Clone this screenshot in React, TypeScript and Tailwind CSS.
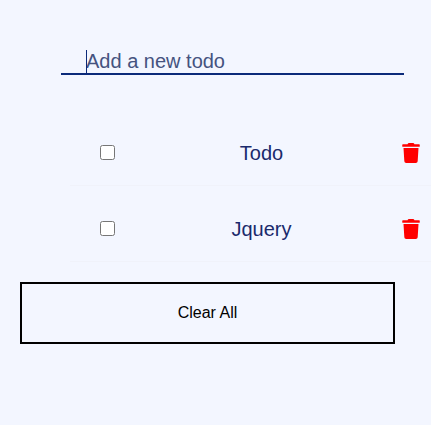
import { FaTrash } from "react-icons/fa";

function Row({ label }: { label: string }) {
  return (
    <li className="flex h-[76px] items-center border-b border-[#f0f2fa] pt-[10px]">
      <div className="flex w-[75px] justify-center">
        <input type="checkbox" className="h-[15px] w-[15px]" />
      </div>
      <span className="flex-1 pr-[13px] text-center text-[20px] text-[#1a2a6c]">{label}</span>
      <button className="flex w-[40px] justify-center text-[#ff0000]">
        <FaTrash size={20} />
      </button>
    </li>
  );
}

export default function App() {
  return (
    <div className="h-[425px] w-[431px] overflow-hidden bg-[#f3f6ff] font-['Liberation_Sans',sans-serif]">
      <div className="pl-[61px] pt-[46px]">
        <div className="relative h-[29px] w-[343px] border-b-2 border-[#0b2a7a] pl-[25px] pt-[3px]">
          <span className="absolute left-[25px] top-[4px] h-[23px] w-px bg-[#0b2a7a]" />
          <input
            placeholder="Add a new todo"
            className="h-[24px] w-full bg-transparent text-[20px] leading-[24px] outline-none placeholder:text-[#45537f]"
          />
        </div>
      </div>
      <ul className="ml-[70px] mt-[35px] w-[361px]">
        <Row label="Todo" />
        <Row label="Jquery" />
      </ul>
      <div className="pl-[20px] pt-[20px]">
        <button className="h-[62px] w-[375px] border-2 border-black text-[16px] text-black">
          Clear All
        </button>
      </div>
    </div>
  );
}
